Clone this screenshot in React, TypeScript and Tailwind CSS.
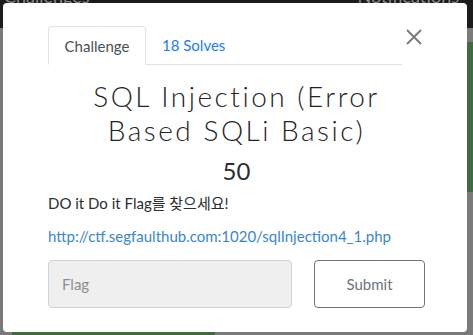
import React from 'react';

// Challenge modal over a dimmed CTF board
function Backdrop() {
  return (
    <div className="flex h-full w-full flex-col bg-[#7a7a7a]">
      {/* dimmed navbar */}
      <div className="flex h-[28px] items-start justify-between bg-[#1c1c1c] px-[4px] text-[18px] leading-[22px] text-[#8a8a8a]">
        <span className="-mt-[15px]">Challenges</span>
        <span className="-mt-[15px] mr-[10px]">Notifications</span>
      </div>
      <div className="flex flex-1 justify-end pt-[14px]">
        <div className="h-[150px] w-[8px] bg-[#3f6b3f]" />
      </div>
      <div className="flex h-[6px] pl-[12px]">
        <div className="h-full w-[203px] bg-[#3f6b3f]" />
      </div>
    </div>
  );
}

function CloseIcon() {
  return (
    <svg width="16" height="16" viewBox="0 0 16 16" className="block">
      <path d="M1 1 L15 15 M15 1 L1 15" stroke="#7d7d7d" strokeWidth="2" fill="none" />
    </svg>
  );
}

export default function App() {
  return (
    <div className="relative h-[335px] w-[473px] overflow-hidden font-['Lato','Noto_Sans_CJK_KR',sans-serif]">
      <Backdrop />

      <div className="absolute left-[3px] top-[3px] h-[329px] w-[464px] rounded-[4px] bg-white pl-[45px] pr-[42px] pt-[23px] text-[#212529]">
        {/* tabs + close */}
        <div className="flex items-start">
          <div className="flex w-[354px] border-b border-[#dee2e6]">
            <div className="-mb-px flex h-[39px] w-[98px] items-center justify-center rounded-t-[4px] border border-b-white border-[#dee2e6] bg-white pt-[1px] text-[15px] text-[#495057]">
              Challenge
            </div>
            <div className="flex h-[38px] items-center pl-[16px] pt-[1px] text-[15px] text-[#1a7cff]">18 Solves</div>
          </div>
          <div className="ml-[4px] mt-[3px]">
            <CloseIcon />
          </div>
        </div>

        <h2 className="mt-[14px] text-center text-[28px] font-light leading-[34px] tracking-[2.5px] text-[#212529]">
          SQL Injection (Error
          <br />
          Based SQLi Basic)
        </h2>
        <div className="mt-[9px] text-center text-[24px] leading-[29px] text-[#2a2e33]">50</div>

        <p className="mt-[8px] text-[15px] leading-[20px] text-[#2a2e33]">DO it Do it Flag를 찾으세요!</p>
        <p className="mt-[13px] text-[15px] leading-[20px]">
          <a className="text-[#3a87c8]">http://ctf.segfaulthub.com:1020/sqlInjection4_1.php</a>
        </p>

        <div className="mt-[14px] flex gap-[22px]">
          <div className="flex h-[48px] w-[244px] items-center rounded-[4px] border border-[#ced4da] bg-[#efefef] pl-[13px] text-[15px] text-[#8a8e92]">
            Flag
          </div>
          <div className="flex h-[48px] w-[111px] items-center justify-center rounded-[4px] border border-[#6c757d] text-[15px] text-[#6c757d]">
            Submit
          </div>
        </div>
      </div>
    </div>
  );
}
